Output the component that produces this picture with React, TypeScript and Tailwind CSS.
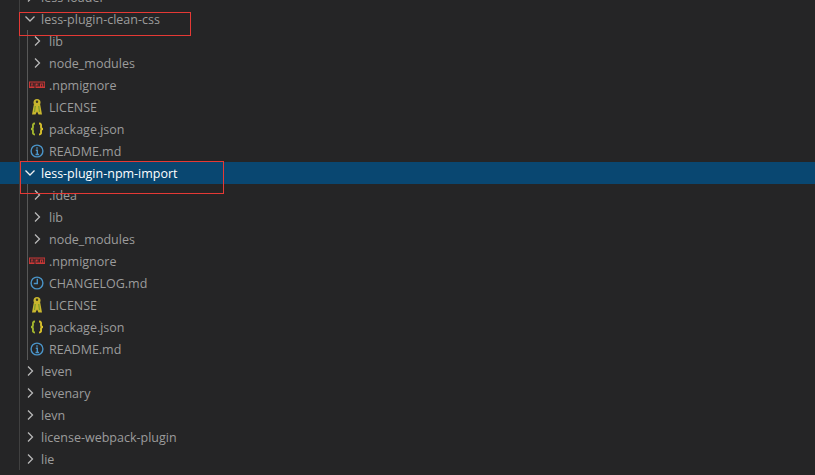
type Row = {
  name: string;
  depth: 0 | 1;
  kind: "open" | "closed" | "npm" | "license" | "json" | "info" | "clock";
  selected?: boolean;
};

const rows: Row[] = [
  { name: "less-loader", depth: 0, kind: "closed" },
  { name: "less-plugin-clean-css", depth: 0, kind: "open" },
  { name: "lib", depth: 1, kind: "closed" },
  { name: "node_modules", depth: 1, kind: "closed" },
  { name: ".npmignore", depth: 1, kind: "npm" },
  { name: "LICENSE", depth: 1, kind: "license" },
  { name: "package.json", depth: 1, kind: "json" },
  { name: "README.md", depth: 1, kind: "info" },
  { name: "less-plugin-npm-import", depth: 0, kind: "open", selected: true },
  { name: ".idea", depth: 1, kind: "closed" },
  { name: "lib", depth: 1, kind: "closed" },
  { name: "node_modules", depth: 1, kind: "closed" },
  { name: ".npmignore", depth: 1, kind: "npm" },
  { name: "CHANGELOG.md", depth: 1, kind: "clock" },
  { name: "LICENSE", depth: 1, kind: "license" },
  { name: "package.json", depth: 1, kind: "json" },
  { name: "README.md", depth: 1, kind: "info" },
  { name: "leven", depth: 0, kind: "closed" },
  { name: "levenary", depth: 0, kind: "closed" },
  { name: "levn", depth: 0, kind: "closed" },
  { name: "license-webpack-plugin", depth: 0, kind: "closed" },
  { name: "lie", depth: 0, kind: "closed" },
];

function RowIcon({ kind, selected }: { kind: Row["kind"]; selected?: boolean }) {
  const chevron = selected ? "#f0f0f0" : "#b8b8b8";
  if (kind === "open")
    return (
      <svg width="16" height="16" viewBox="0 0 16 16" fill="none" stroke={chevron} strokeWidth="1.300">
        <path d="M3.500 5.500L8 10l4.500-4.500" />
      </svg>
    );
  if (kind === "closed")
    return (
      <svg width="16" height="16" viewBox="0 0 16 16" fill="none" stroke={chevron} strokeWidth="1.300">
        <path d="M6 3.500L10.500 8 6 12.500" />
      </svg>
    );
  if (kind === "npm")
    return (
      <svg width="16" height="16" viewBox="0 0 16 16">
        <rect x="0" y="4.500" width="16" height="6.500" fill="#cb3837" />
        <path d="M1.500 9.500V6h3.200v3.500M3.100 7.500v2M6 11V6h3.200v3H7.200M10.500 9.500V6h4.200v3.500M12.600 7.500v2" stroke="#3a2426" strokeWidth="1.100" fill="none" />
      </svg>
    );
  if (kind === "license")
    return (
      <svg width="16" height="16" viewBox="0 0 16 16">
        <circle cx="8" cy="3.500" r="3.500" fill="#c8b62e" />
        <circle cx="8" cy="2.800" r="1.200" fill="#3c3a22" />
        <path d="M4.800 5.500L3 15.500h3.500L8 12.500l1.500 3H13L11.200 5.500z" fill="#c8b62e" />
        <path d="M6.300 7l-.8 6M9.700 7l.8 6" stroke="#7c9a2a" strokeWidth="1.200" />
      </svg>
    );
  if (kind === "json")
    return (
      <svg width="16" height="16" viewBox="0 0 16 16" fill="none" strokeWidth="1.900">
        <path d="M6 2.500C3.300 2.500 4 4.500 4 6c0 1.300-.7 2-2 2 1.300 0 2 .7 2 2 0 1.500-.7 3.500 2 3.500" stroke="#a2b52e" />
        <path d="M10 2.500c2.700 0 2 2 2 3.500 0 1.300.7 2 2 2-1.300 0-2 .7-2 2 0 1.500.7 3.500-2 3.500" stroke="#d6bf2c" />
      </svg>
    );
  if (kind === "info")
    return (
      <svg width="16" height="16" viewBox="0 0 16 16" fill="none" stroke="#4a94c8">
        <circle cx="8" cy="8" r="5.900" strokeWidth="1.400" />
        <path d="M8 4.200v1.500M6.800 7.200H8.300V11.500M6.500 11.500h3.500" strokeWidth="1.400" />
      </svg>
    );
  return (
    <svg width="16" height="16" viewBox="0 0 16 16" fill="none" stroke="#4a94c8">
      <circle cx="8" cy="8" r="5.900" strokeWidth="1.400" />
      <path d="M8.300 3.800V8.500H4.800" strokeWidth="1.400" />
    </svg>
  );
}

export default function App() {
  return (
    <div className="relative h-[475px] w-[815px] overflow-hidden bg-[#252526] font-['Open_Sans','Noto_Sans',sans-serif] text-[12.5px]">
      <div className="mt-[-14px] flex flex-col">
        {rows.map((row, i) => (
          <div
            key={i}
            className={`flex h-[22px] shrink-0 items-stretch pl-[19px] ${row.selected ? "bg-[#094771] text-white" : "text-[#9c9c9c]"}`}
          >
            <span className="w-px bg-[#404040]" />
            {row.depth === 1 && <span className="ml-[7px] w-px bg-[#585858]" />}
            <span className={`flex items-center ${row.depth === 1 ? "pl-[1px]" : "pl-[2px]"}`}>
              <span className="flex w-[20px] shrink-0 items-center">
                <RowIcon kind={row.kind} selected={row.selected} />
              </span>
              <span className={`whitespace-nowrap pt-[2px] ${row.depth === 0 ? "ml-[-1px]" : ""}`}>{row.name}</span>
            </span>
          </div>
        ))}
      </div>
      <div className="absolute left-[19px] top-[12px] h-[24px] w-[172px] border border-[#e53935]" />
      <div className="absolute left-[20px] top-[161px] h-[33px] w-[204px] border border-[#e53935]" />
    </div>
  );
}
